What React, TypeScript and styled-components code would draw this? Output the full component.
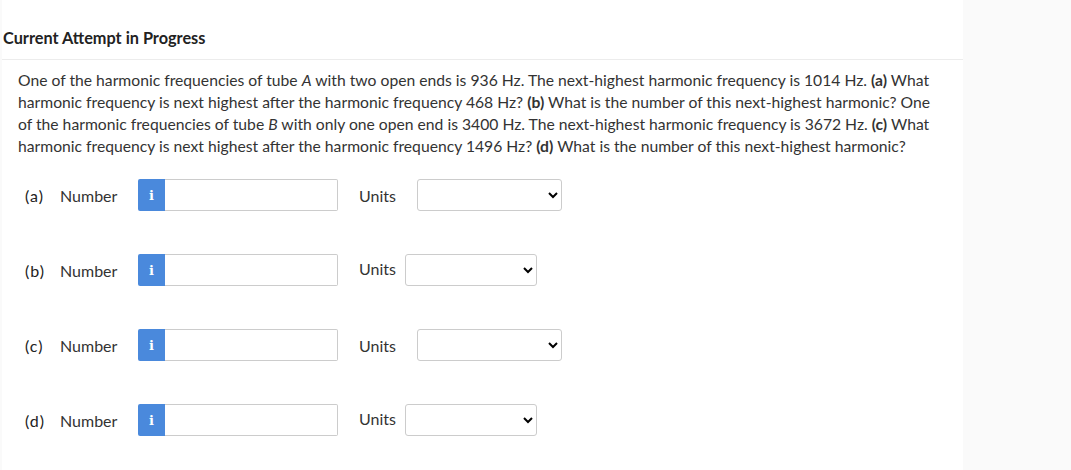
import React from 'react'
import styled, { createGlobalStyle } from 'styled-components'

const GlobalStyle = createGlobalStyle`
  body {
    margin: 0;
    background: #fafafa;
    font-family: Lato, "Open Sans", sans-serif;
    color: #333;
  }
`;

const Panel = styled.div`
  width: 961px;
  min-height: 470px;
  margin-left: 2px;
  background: #ffffff;
`;

const Title = styled.h2`
  margin: 0;
  padding: 29px 0 12px 1px;
  font-size: 16.3px;
  font-weight: 700;
  line-height: 18px;
  color: #222;
  border-bottom: 1px solid #ececec;
`;

const Question = styled.p`
  margin: 0;
  padding: 9px 0 0 16px;
  font-size: 15.7px;
  line-height: 22px;
  white-space: nowrap;
  em { font-style: italic; }
  strong { font-weight: 700; }
`;

const Rows = styled.div`
  display: flex;
  flex-direction: column;
  gap: 43px;
  padding: 22px 0 0 23px;
`;

const Row = styled.div`
  display: flex;
  align-items: center;
  height: 32px;
`;

const Part = styled.span`
  font-size: 16px;
  letter-spacing: 1px;
  width: 35px;
  color: #222;
`;

const Label = styled.span`
  font-size: 16px;
  width: 78px;
`;

const InfoButton = styled.button`
  width: 27px;
  height: 32px;
  border: 0;
  padding: 0;
  background: #4a89dc;
  border-radius: 2px 0 0 2px;
  color: #fff;
  font-family: "DejaVu Serif", serif;
  font-weight: 900;
  font-size: 13px;
  cursor: pointer;
`;

const NumberInput = styled.input`
  box-sizing: border-box;
  width: 173px;
  height: 32px;
  border: 1px solid #cccccc;
  border-left: 0;
  border-radius: 0 2px 2px 0;
  outline: none;
`;

const UnitsLabel = styled.span<{ $wide: boolean }>`
  font-size: 16px;
  margin-left: 21px;
  width: ${p => (p.$wide ? '58px' : '46px')};
  align-self: ${p => (p.$wide ? 'center' : 'flex-start')};
  margin-top: ${p => (p.$wide ? '0' : '5px')};
`;

const UnitsSelect = styled.select<{ $wide: boolean }>`
  box-sizing: border-box;
  width: ${p => (p.$wide ? '145px' : '132px')};
  height: 32px;
  border: 1px solid #cccccc;
  border-radius: 3px;
  background: #fff;
  font-family: Lato, sans-serif;
  font-size: 14px;
`;

const parts = [
  { key: 'a', wide: true },
  { key: 'b', wide: false },
  { key: 'c', wide: true },
  { key: 'd', wide: false },
];

export default function App() {
  return (
    <>
      <GlobalStyle />
      <Panel>
        <Title>Current Attempt in Progress</Title>
        <Question>
          One of the harmonic frequencies of tube <em>A</em> with two open ends is 936 Hz. The next-highest harmonic
          frequency is 1014 Hz. <strong>(a)</strong> What
          <br />
          harmonic frequency is next highest after the harmonic frequency 468 Hz? <strong>(b)</strong> What is the
          number of this next-highest harmonic? One
          <br />
          of the harmonic frequencies of tube <em>B</em> with only one open end is 3400 Hz. The next-highest harmonic
          frequency is 3672 Hz. <strong>(c)</strong> What
          <br />
          harmonic frequency is next highest after the harmonic frequency 1496 Hz? <strong>(d)</strong> What is the
          number of this next-highest harmonic?
        </Question>
        <Rows>
          {parts.map(p => (
            <Row key={p.key}>
              <Part>({p.key})</Part>
              <Label>Number</Label>
              <InfoButton type="button">i</InfoButton>
              <NumberInput type="text" />
              <UnitsLabel $wide={p.wide}>Units</UnitsLabel>
              <UnitsSelect $wide={p.wide}>
                <option value=""></option>
              </UnitsSelect>
            </Row>
          ))}
        </Rows>
      </Panel>
    </>
  )
}
